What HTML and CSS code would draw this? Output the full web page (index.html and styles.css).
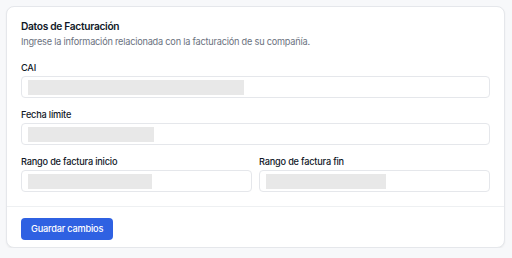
FILE: index.html
```html
<!DOCTYPE html>
<html lang="es">
<head>
<meta charset="utf-8">
<link rel="stylesheet" href="styles.css">
</head>
<body>
<div class="card">
  <div class="card-body">
    <h2 class="title">Datos de Facturación</h2>
    <p class="subtitle">Ingrese la información relacionada con la facturación de su compañía.</p>
    <div class="fields">
      <div class="field">
        <label class="label">CAI</label>
        <div class="input"><span class="ph" style="width:216px"></span></div>
      </div>
      <div class="field">
        <label class="label">Fecha límite</label>
        <div class="input"><span class="ph" style="width:126px"></span></div>
      </div>
      <div class="row">
        <div class="field">
          <label class="label">Rango de factura inicio</label>
          <div class="input"><span class="ph" style="width:124px"></span></div>
        </div>
        <div class="field">
          <label class="label">Rango de factura fin</label>
          <div class="input"><span class="ph" style="width:120px"></span></div>
        </div>
      </div>
    </div>
  </div>
  <div class="card-footer">
    <button class="btn">Guardar cambios</button>
  </div>
</div>
</body>
</html>
```
FILE: styles.css
```css
html, body { margin: 0; padding: 0; }
body {
  background: #f7f8fa;
  font-family: Inter, "Noto Sans", sans-serif;
  padding: 6px 7px 0 6px;
  color: #111827;
}
.card {
  background: #fff;
  border: 1px solid #e5e7eb;
  border-radius: 8px;
  box-shadow: 0 1px 2px rgba(0,0,0,0.06);
  height: 242px;
  box-sizing: border-box;
  display: flex;
  flex-direction: column;
}
.card-body {
  padding: 12px 14px 14px 14px;
  border-bottom: 1px solid #eef0f2;
}
.title {
  margin: 0;
  font-size: 10.2px;
  letter-spacing: -0.3px;
  line-height: 14px;
  font-weight: 600;
  color: #111827;
}
.subtitle {
  margin: 2px 0 0;
  font-size: 9.2px;
  letter-spacing: -0.22px;
  line-height: 14px;
  color: #6b7280;
}
.fields {
  margin-top: 12px;
  display: flex;
  flex-direction: column;
  gap: 10px;
}
.row {
  display: grid;
  grid-template-columns: 1fr 1fr;
  gap: 7px;
}
.field { display: flex; flex-direction: column; }
.label {
  font-size: 9.2px;
  letter-spacing: -0.2px;
  line-height: 14px;
  font-weight: 500;
  color: #111827;
  margin-bottom: 1px;
}
.input {
  height: 22px;
  box-sizing: border-box;
  border: 1px solid #e5e7eb;
  border-radius: 4px;
  padding: 2px 6px;
  display: flex;
  align-items: center;
}
.ph {
  display: block;
  height: 15px;
  background: #e8e8e8;
}
.card-footer {
  padding: 9px 14px;
}
.btn {
  background: #2f61e2;
  color: #fff;
  border: none;
  border-radius: 4px;
  font-family: Inter, "Noto Sans", sans-serif;
  font-size: 9.2px;
  letter-spacing: -0.2px;
  font-weight: 500;
  height: 22px;
  padding: 0 10px;
  cursor: pointer;
}
```
